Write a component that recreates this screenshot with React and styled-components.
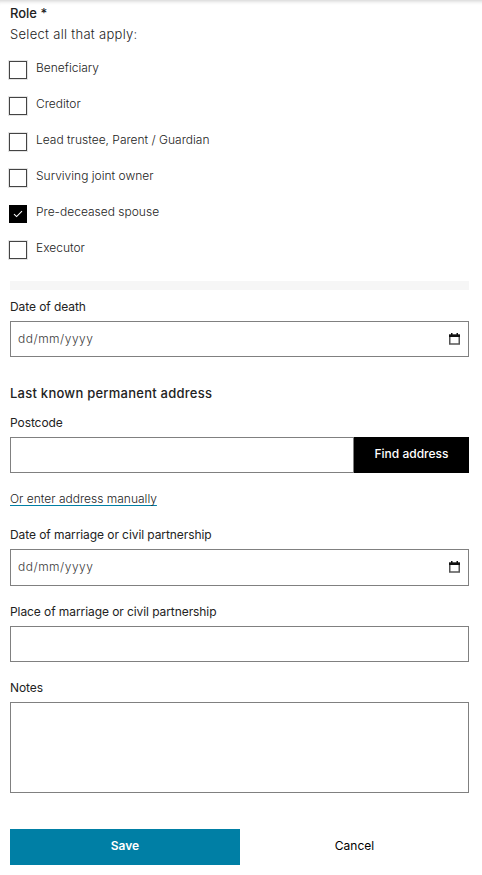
import React from 'react';
import styled, { createGlobalStyle } from 'styled-components';

const GlobalStyle = createGlobalStyle`
  html, body { margin: 0; padding: 0; background: #fff; }
  * { box-sizing: border-box; }
  body { font-family: Inter, "Liberation Sans", sans-serif; color: #222; }
`;

const Page = styled.div`
  width: 482px;
  height: 875px;
  overflow: hidden;
  padding: 0 13px 0 10px;
  position: relative;
  box-shadow: inset 0 5px 4px -4px rgba(0, 0, 0, 0.2);
`;

const Heading = styled.div`
  padding-top: 6px;
  font-size: 13px;
  font-weight: 500;
  line-height: 15px;
`;

const Hint = styled.div`
  margin-top: 5px;
  font-size: 13px;
  font-weight: 300;
  line-height: 16px;
  letter-spacing: 0.3px;
`;

const CheckList = styled.div`
  display: flex;
  flex-direction: column;
  gap: 18px;
  margin-top: 19px;
  margin-left: -1px;
`;

const CheckRow = styled.label`
  display: flex;
  align-items: flex-start;
  gap: 9px;
  height: 18px;
`;

const Box = styled.span`
  width: 18px;
  height: 18px;
  flex: none;
  display: flex;
  align-items: center;
  justify-content: center;
  border: 1px solid ${(props) => (props.$checked ? '#000' : '#444')};
  background: ${(props) => (props.$checked ? '#000' : '#fff')};
  outline: 1px solid ${(props) => (props.$checked ? 'transparent' : '#e4e4e4')};
  outline-offset: 0;
`;

const CheckText = styled.span`
  font-size: 12px;
  font-weight: 300;
  line-height: 14px;
`;

const Divider = styled.div`
  height: 9px;
  margin-top: 22px;
  background: #f6f6f6;
`;

const FieldLabel = styled.div`
  font-size: 12px;
  font-weight: 400;
  line-height: 14px;
  letter-spacing: -0.08px;
  margin-top: ${(props) => props.$top || 0}px;
  margin-bottom: 7px;
`;

const SectionTitle = styled.div`
  font-size: 13px;
  font-weight: 500;
  line-height: 16px;
  letter-spacing: 0.25px;
  margin-top: 28px;
`;

const DateField = styled.div`
  height: ${(props) => (props.$tall ? 37 : 36)}px;
  border: 1px solid #808080;
  display: flex;
  align-items: center;
  justify-content: space-between;
  padding: 0 8px ${(props) => (props.$tall ? 2 : 1)}px 7px;
  font-size: 12px;
  font-weight: 300;
  letter-spacing: 0.5px;
  color: #3a3a3a;
`;

const TextField = styled.input`
  display: block;
  width: 100%;
  height: 36px;
  border: 1px solid #808080;
  border-radius: 0;
  padding: 0 7px;
  outline: none;
  background: #fff;
`;

const NotesField = styled.textarea`
  display: block;
  width: 100%;
  height: 91px;
  border: 1px solid #808080;
  border-radius: 0;
  padding: 7px;
  outline: none;
  resize: none;
  background: #fff;
`;

const PostcodeRow = styled.div`
  display: flex;
  height: 36px;
`;

const PostcodeInput = styled(TextField)`
  flex: 1;
  width: auto;
  min-width: 0;
`;

const FindButton = styled.button`
  width: 115px;
  flex: none;
  border: 0;
  padding: 0 0 4px;
  background: #000;
  color: #fff;
  font-family: inherit;
  font-size: 12px;
  font-weight: 500;
`;

const ManualLink = styled.a`
  display: block;
  margin-top: 18px;
  font-size: 12px;
  font-weight: 300;
  line-height: 15px;
  color: #222;
  text-decoration: underline;
  text-decoration-color: #007fa5;
  text-decoration-thickness: 1px;
  text-underline-offset: 2px;
`;

const Actions = styled.div`
  display: flex;
  margin-top: 36px;
  height: 36px;
`;

const SaveButton = styled.button`
  width: 230px;
  border: 0;
  padding: 0 0 4px;
  background: #007fa5;
  color: #fff;
  font-family: inherit;
  font-size: 12px;
  font-weight: 600;
`;

const CancelButton = styled.button`
  flex: 1;
  border: 0;
  padding: 0 0 4px;
  background: #fff;
  color: #000;
  font-family: inherit;
  font-size: 12px;
  font-weight: 400;
`;

const CalendarIcon = () => (
  <svg width="11" height="12" viewBox="0 0 11 12" aria-hidden="true">
    <rect x="0.75" y="2.25" width="9.5" height="8.75" fill="none" stroke="#555" strokeWidth="1.5" />
    <rect x="0" y="1.5" width="11" height="2.5" fill="#111" />
    <rect x="2" y="0" width="1.5" height="2" fill="#111" />
    <rect x="7.5" y="0" width="1.5" height="2" fill="#111" />
  </svg>
);

const CheckMark = () => (
  <svg width="10" height="8" viewBox="0 0 10 8" aria-hidden="true">
    <path d="M1 4.2 L3.6 6.6 L9 1.2" fill="none" stroke="#fff" strokeWidth="1.1" />
  </svg>
);

const roles = [
  { name: 'Beneficiary' },
  { name: 'Creditor' },
  { name: 'Lead trustee, Parent / Guardian' },
  { name: 'Surviving joint owner' },
  { name: 'Pre-deceased spouse', checked: true },
  { name: 'Executor' },
];

const App = () => (
  <>
    <GlobalStyle />
    <Page>
      <Heading>Role *</Heading>
      <Hint>Select all that apply:</Hint>
      <CheckList>
        {roles.map((role) => (
          <CheckRow key={role.name}>
            <Box $checked={role.checked}>{role.checked && <CheckMark />}</Box>
            <CheckText>{role.name}</CheckText>
          </CheckRow>
        ))}
      </CheckList>
      <Divider />
      <FieldLabel $top={10}>Date of death</FieldLabel>
      <DateField>
        dd/mm/yyyy
        <CalendarIcon />
      </DateField>
      <SectionTitle>Last known permanent address</SectionTitle>
      <FieldLabel $top={15}>Postcode</FieldLabel>
      <PostcodeRow>
        <PostcodeInput />
        <FindButton>Find address</FindButton>
      </PostcodeRow>
      <ManualLink href="#">Or enter address manually</ManualLink>
      <FieldLabel $top={22}>Date of marriage or civil partnership</FieldLabel>
      <DateField $tall>
        dd/mm/yyyy
        <CalendarIcon />
      </DateField>
      <FieldLabel $top={19}>Place of marriage or civil partnership</FieldLabel>
      <TextField />
      <FieldLabel $top={19}>Notes</FieldLabel>
      <NotesField />
      <Actions>
        <SaveButton>Save</SaveButton>
        <CancelButton>Cancel</CancelButton>
      </Actions>
    </Page>
  </>
);

export default App;
